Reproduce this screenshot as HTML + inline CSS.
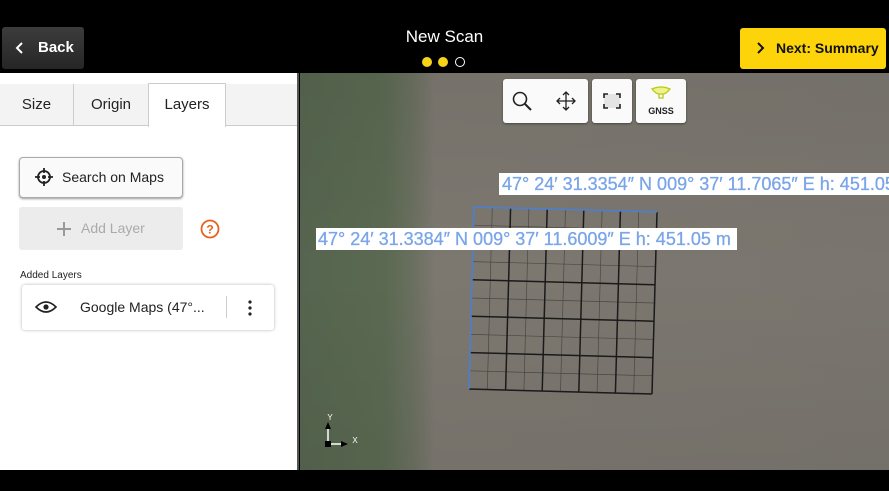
<!DOCTYPE html>
<html><head><meta charset="utf-8"><style>
*{box-sizing:border-box;margin:0;padding:0}
body{width:889px;height:491px;background:#000;font-family:"Liberation Sans",sans-serif;position:relative;overflow:hidden}
.abs{position:absolute}
</style></head><body>
<div class="abs" style="left:2px;top:27px;width:82px;height:42px;background:linear-gradient(#3c3c3c,#262626);border-radius:3px;color:#fff;font-size:15px;font-weight:bold;line-height:42px;padding-left:36px">Back</div>
<svg class="abs" style="left:14px;top:40px" width="12" height="16"><path d="M8 3L3 8L8 13" stroke="#fff" stroke-width="2" fill="none"/></svg>
<div class="abs" style="left:0;width:889px;top:27px;text-align:center;color:#fff;font-size:17px">New Scan</div>
<div class="abs" style="left:422px;top:57px;width:10px;height:10px;border-radius:50%;background:#f7d417"></div>
<div class="abs" style="left:438px;top:57px;width:10px;height:10px;border-radius:50%;background:#f7d417"></div>
<div class="abs" style="left:455px;top:57px;width:10px;height:10px;border-radius:50%;border:1.5px solid #fff"></div>
<div class="abs" style="left:740px;top:28px;width:146px;height:41px;background:#fdd40a;border-radius:3px;color:#111;font-size:14px;font-weight:bold;line-height:41px;padding-left:36px">Next: Summary</div>
<svg class="abs" style="left:754px;top:40px" width="12" height="16"><path d="M4 3L9 8L4 13" stroke="#111" stroke-width="2" fill="none"/></svg>
<div class="abs" style="left:0;top:73px;width:299px;height:397px;background:#fff;border-right:2px solid #555"></div>
<div class="abs" style="left:0;top:84px;width:297px;height:42px;background:#f3f3f3;border-bottom:1px solid #ccc"></div>
<div class="abs" style="left:0;top:84px;width:74px;height:42px;border-right:1px solid #ccc;font-size:15px;line-height:42px;text-align:center;color:#222">Size</div>
<div class="abs" style="left:74px;top:84px;width:75px;height:42px;border-right:1px solid #ccc;font-size:15px;line-height:42px;text-align:center;color:#222">Origin</div>
<div class="abs" style="left:148px;top:83px;width:78px;height:44px;background:#fff;border:1px solid #ccc;border-bottom:none;font-size:15px;line-height:42px;text-align:center;color:#222">Layers</div>
<div class="abs" style="left:19px;top:157px;width:164px;height:41px;background:#fafafa;border:1px solid #aaa;border-radius:4px;box-shadow:0 1px 2px rgba(0,0,0,.4);font-size:14px;line-height:39px;padding-left:42px;color:#222">Search on Maps</div>
<svg class="abs" style="left:34px;top:167px" width="20" height="20"><circle cx="10" cy="10" r="6" stroke="#222" stroke-width="1.8" fill="none"/><circle cx="10" cy="10" r="2" fill="#222"/><path d="M10 1v5M10 14v5M1 10h5M14 10h5" stroke="#222" stroke-width="1.8"/></svg>
<div class="abs" style="left:19px;top:207px;width:164px;height:43px;background:#ececec;border-radius:3px;font-size:14px;line-height:43px;padding-left:62px;color:#aaa">Add Layer</div>
<svg class="abs" style="left:55px;top:220px" width="18" height="18"><path d="M9 2v14M2 9h14" stroke="#999" stroke-width="2"/></svg>
<svg class="abs" style="left:199px;top:218px" width="22" height="22"><circle cx="11" cy="11" r="8.5" stroke="#e8611c" stroke-width="1.8" fill="none"/><text x="11" y="15.5" text-anchor="middle" font-size="12" font-weight="bold" fill="#e8611c" font-family="Liberation Sans">?</text></svg>
<div class="abs" style="left:20px;top:270px;font-size:10px;color:#222">Added Layers</div>
<div class="abs" style="left:22px;top:285px;width:252px;height:45px;background:#fff;border-radius:3px;box-shadow:0 0 3px rgba(0,0,0,.3);font-size:14px;line-height:45px;padding-left:58px;color:#222">Google Maps (47°...</div>
<svg class="abs" style="left:35px;top:300px" width="22" height="14"><path d="M1 7Q11 -3 21 7Q11 17 1 7Z" stroke="#222" stroke-width="1.6" fill="none"/><circle cx="11" cy="7" r="2.6" fill="#222"/></svg>
<div class="abs" style="left:226px;top:296px;width:1px;height:22px;background:#ccc"></div>
<svg class="abs" style="left:246px;top:299px" width="8" height="18"><circle cx="4" cy="3" r="1.6" fill="#222"/><circle cx="4" cy="9" r="1.6" fill="#222"/><circle cx="4" cy="15" r="1.6" fill="#222"/></svg>
<div class="abs" style="left:300px;top:73px;width:589px;height:397px;background:linear-gradient(90deg,#56654f 0,#5b6952 85px,#6b7060 115px,#7c7870 135px,#7a766f 100%)"></div>
<div class="abs" style="left:300px;top:73px;width:589px;height:397px;background:linear-gradient(180deg,rgba(0,0,0,.05),rgba(0,0,0,0) 50%,rgba(0,0,0,.05))"></div>
<svg class="abs" style="left:0;top:0" width="889" height="491">
<g stroke="#1a1a1a" fill="none">
<g stroke-width="0.7" opacity="0.5">
<line x1="492.3" y1="207.5" x2="487.3" y2="389.5"/><line x1="528.9" y1="208.5" x2="523.9" y2="390.5"/><line x1="565.5" y1="209.5" x2="560.5" y2="391.5"/><line x1="602.1" y1="210.5" x2="597.1" y2="392.5"/><line x1="638.7" y1="211.5" x2="633.7" y2="393.5"/>
<line x1="473.5" y1="225.2" x2="656.5" y2="230.2"/><line x1="472.5" y1="261.6" x2="655.5" y2="266.6"/><line x1="471.5" y1="298" x2="654.5" y2="303"/><line x1="470.5" y1="334.4" x2="653.5" y2="339.4"/><line x1="469.5" y1="370.8" x2="652.5" y2="375.8"/>
</g>
<g stroke-width="1.5">
<line x1="510.6" y1="208" x2="505.6" y2="390"/><line x1="547.2" y1="209" x2="542.2" y2="391"/><line x1="583.8" y1="210" x2="578.8" y2="392"/><line x1="620.4" y1="211" x2="615.4" y2="393"/><line x1="657" y1="212" x2="652" y2="394"/>
<line x1="473" y1="243.4" x2="656" y2="248.4"/><line x1="472" y1="279.8" x2="655" y2="284.8"/><line x1="471" y1="316.2" x2="654" y2="321.2"/><line x1="470" y1="352.6" x2="653" y2="357.6"/><line x1="469" y1="389" x2="652" y2="394"/>
</g>
<path d="M469 389L474 207L657 212" stroke="#4a7fd4" stroke-width="1.5"/>
</g>
<path d="M328 444V424M328 444H346" stroke="#fff" stroke-width="1.5"/>
<path d="M328 422l-3 7h6zM348 444l-7-3v6z" fill="#000"/>
<rect x="325" y="441" width="6" height="6" fill="#000"/>
<text x="330" y="420" font-size="8" fill="#fff" text-anchor="middle" font-family="Liberation Sans">Y</text>
<text x="355" y="443" font-size="8" fill="#fff" text-anchor="middle" font-family="Liberation Sans">X</text>
</svg>
<div class="abs" style="left:499px;top:173px;width:390px;height:22px;background:#fff;color:#7aa5e8;font-size:18px;line-height:22px;padding-left:3px;white-space:nowrap;overflow:hidden;-webkit-text-stroke:0.3px #7aa5e8">47° 24′ 31.3354″ N 009° 37′ 11.7065″ E h: 451.05 m</div>
<div class="abs" style="left:316px;top:228px;width:421px;height:22px;background:#fff;color:#7aa5e8;font-size:18px;line-height:22px;padding-left:2px;white-space:nowrap;overflow:hidden;-webkit-text-stroke:0.3px #7aa5e8">47° 24′ 31.3384″ N 009° 37′ 11.6009″ E h: 451.05 m</div>
<div class="abs" style="left:503px;top:79px;width:85px;height:44px;background:#fafafa;border-radius:3px;box-shadow:0 1px 2px rgba(0,0,0,.4)"></div>
<svg class="abs" style="left:511px;top:90px" width="22" height="22"><circle cx="9" cy="9" r="6.5" stroke="#222" stroke-width="1.6" fill="none"/><path d="M14 14l6 6" stroke="#222" stroke-width="2"/></svg>
<svg class="abs" style="left:555px;top:90px" width="22" height="22"><path d="M11 2v18M2 11h18M8 5l3-3 3 3M8 17l3 3 3-3M5 8l-3 3 3 3M17 8l3 3-3 3" stroke="#222" stroke-width="1.3" fill="none"/></svg>
<div class="abs" style="left:592px;top:79px;width:40px;height:44px;background:#fafafa;border-radius:3px;box-shadow:0 1px 2px rgba(0,0,0,.4)"></div>
<svg class="abs" style="left:602px;top:92px" width="20" height="18"><rect x="2" y="2" width="16" height="14" fill="#e4e4e4"/><path d="M2 6V2h4M14 2h4v4M18 12v4h-4M6 16H2v-4" stroke="#222" stroke-width="1.6" fill="none"/></svg>
<div class="abs" style="left:636px;top:79px;width:50px;height:44px;background:#fafafa;border-radius:3px;box-shadow:0 1px 2px rgba(0,0,0,.4);font-size:9px;font-weight:bold;text-align:center;padding-top:27px;color:#222">GNSS</div>
<svg class="abs" style="left:650px;top:86px" width="22" height="14"><path d="M2 3Q11 -1 20 3Q16 8 13 8H9Q6 8 2 3Z" stroke="#b9c81d" stroke-width="1.3" fill="#eef38a"/><path d="M9 8v4h4V8" stroke="#b9c81d" stroke-width="1.3" fill="none"/></svg>
</body></html>
